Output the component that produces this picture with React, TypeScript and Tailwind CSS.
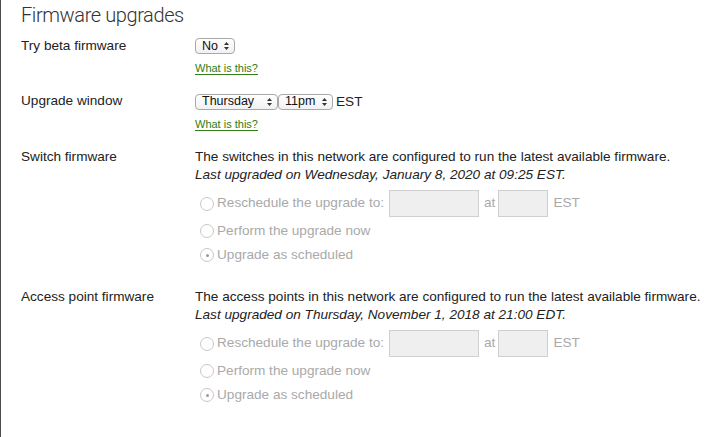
import React from 'react'

function Arrows() {
  return (
    <svg width="7" height="10" viewBox="0 0 7 10" className="shrink-0">
      <path d="M3.5 1 L6 4 H1 Z" fill="#333" />
      <path d="M3.5 9 L6 6 H1 Z" fill="#333" />
    </svg>
  )
}

function Select({ value, width }: { value: string; width: string }) {
  return (
    <div
      className={`${width} h-[16px] flex items-center justify-between pl-[6px] pr-[4px] rounded-[4px] border border-[#a8a8a8] bg-gradient-to-b from-white to-[#f1f1f1] text-[12.5px] leading-none text-[#111]`}
    >
      <span>{value}</span>
      <Arrows />
    </div>
  )
}

function WhatIsThis({ mt }: { mt: string }) {
  return (
    <a href="#" className={`${mt} block w-fit text-[11px] leading-[14px] text-[#2f7d14] underline underline-offset-[2px]`}>
      What is this?
    </a>
  )
}

function Radio({ checked }: { checked?: boolean }) {
  return (
    <span className="w-[14px] h-[14px] rounded-full border border-[#c8c8c8] bg-white flex items-center justify-center shrink-0 mr-[3px]">
      {checked && <span className="w-[3px] h-[3px] rounded-full bg-[#9a9a9a]" />}
    </span>
  )
}

function UpgradeBlock({ label, text, last }: { label: string; text: string; last: string }) {
  return (
    <div className="flex">
      <div className="w-[174px] shrink-0 leading-[18px]">{label}</div>
      <div className="flex-1">
        <p className="leading-[18px] whitespace-nowrap">{text}</p>
        <p className="leading-[18px] italic">{last}</p>
        <div className="pl-[5px] text-[#a9a9a9]">
          <div className="mt-[6px] h-[27px] flex items-center">
            <Radio />
            <span>Reschedule the upgrade to:</span>
            <div className="ml-[5px] w-[90px] h-[27px] border border-[#cfcfcf] bg-[#efefef]" />
            <span className="ml-[5px]">at</span>
            <div className="ml-[3px] w-[50px] h-[27px] border border-[#cfcfcf] bg-[#efefef]" />
            <span className="ml-[5px]">EST</span>
          </div>
          <div className="mt-[5px] h-[18px] flex items-center">
            <Radio />
            <span>Perform the upgrade now</span>
          </div>
          <div className="mt-[6px] h-[18px] flex items-center">
            <Radio checked />
            <span>Upgrade as scheduled</span>
          </div>
        </div>
      </div>
    </div>
  )
}

export default function App() {
  return (
    <div className="min-h-screen bg-white border-l border-[#4a4a4a] pl-[20px] text-[13.6px] text-[#222] font-['Liberation_Sans',Arial,sans-serif]">
      <h2 className="pt-[3px] pb-[1px] text-[20px] leading-[24px] tracking-[-0.4px] font-light text-[#333] font-['Roboto',sans-serif]">Firmware upgrades</h2>

      {/* Try beta */}
      <div className="mt-[9px] flex">
        <div className="w-[174px] shrink-0 leading-[18px]">Try beta firmware</div>
        <div className="pt-[1px]">
          <Select value="No" width="w-[40px]" />
        </div>
      </div>
      <div className="pl-[174px]">
        <WhatIsThis mt="mt-[6px]" />
      </div>

      {/* Upgrade window */}
      <div className="mt-[17px] flex">
        <div className="w-[174px] shrink-0 leading-[18px]">Upgrade window</div>
        <div className="pt-[1px] flex items-center">
          <Select value="Thursday" width="w-[83px]" />
          <Select value="11pm" width="w-[55px]" />
          <span className="ml-[3px] leading-[16px]">EST</span>
        </div>
      </div>
      <div className="pl-[174px]">
        <WhatIsThis mt="mt-[7px]" />
      </div>

      <div className="mt-[17px]">
        <UpgradeBlock
          label="Switch firmware"
          text="The switches in this network are configured to run the latest available firmware."
          last="Last upgraded on Wednesday, January 8, 2020 at 09:25 EST."
        />
      </div>
      <div className="mt-[24px] pb-[20px]">
        <UpgradeBlock
          label="Access point firmware"
          text="The access points in this network are configured to run the latest available firmware."
          last="Last upgraded on Thursday, November 1, 2018 at 21:00 EDT."
        />
      </div>
    </div>
  )
}
